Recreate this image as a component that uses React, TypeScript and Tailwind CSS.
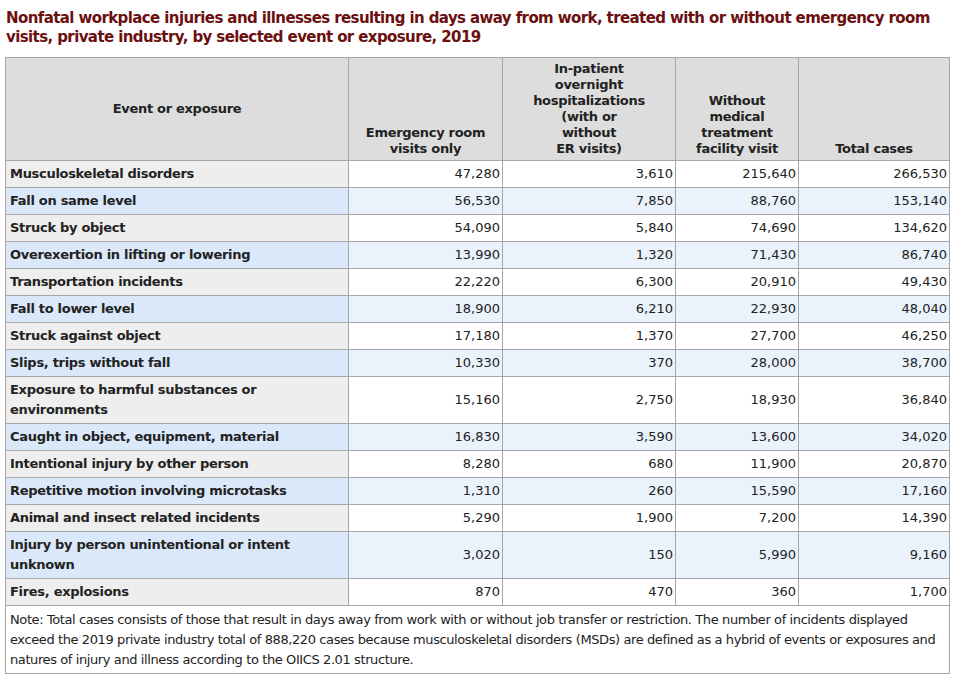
const rows: [string, string, string, string, string][] = [
  ["Musculoskeletal disorders", "47,280", "3,610", "215,640", "266,530"],
  ["Fall on same level", "56,530", "7,850", "88,760", "153,140"],
  ["Struck by object", "54,090", "5,840", "74,690", "134,620"],
  ["Overexertion in lifting or lowering", "13,990", "1,320", "71,430", "86,740"],
  ["Transportation incidents", "22,220", "6,300", "20,910", "49,430"],
  ["Fall to lower level", "18,900", "6,210", "22,930", "48,040"],
  ["Struck against object", "17,180", "1,370", "27,700", "46,250"],
  ["Slips, trips without fall", "10,330", "370", "28,000", "38,700"],
  ["Exposure to harmful substances or environments", "15,160", "2,750", "18,930", "36,840"],
  ["Caught in object, equipment, material", "16,830", "3,590", "13,600", "34,020"],
  ["Intentional injury by other person", "8,280", "680", "11,900", "20,870"],
  ["Repetitive motion involving microtasks", "1,310", "260", "15,590", "17,160"],
  ["Animal and insect related incidents", "5,290", "1,900", "7,200", "14,390"],
  ["Injury by person unintentional or intent unknown", "3,020", "150", "5,990", "9,160"],
  ["Fires, explosions", "870", "470", "360", "1,700"],
];

export default function App() {
  return (
    <div className="min-h-screen bg-white text-[#222] font-['DejaVu_Sans',sans-serif] text-[13px] px-[5px] pt-[9px]">
      <h2 className="text-[15px] leading-[19px] font-bold tracking-[-0.6px] text-[#6b0f0f] pl-px">
        Nonfatal workplace injuries and illnesses resulting in days away from work, treated with or without emergency room
        visits, private industry, by selected event or exposure, 2019
      </h2>
      <table className="mt-[10px] w-[944px] table-fixed border-collapse border border-[#a6a6a6]">
        <colgroup>
          <col className="w-[343px]" />
          <col className="w-[154px]" />
          <col className="w-[173px]" />
          <col className="w-[123px]" />
          <col className="w-[151px]" />
        </colgroup>
        <thead>
          <tr className="bg-[#dddddd] font-bold leading-[16px] tracking-[-0.3px]">
            <th className="border border-[#a6a6a6] align-middle px-1 py-1 h-[103px]">Event or exposure</th>
            <th className="border border-[#a6a6a6] align-bottom px-1 pt-1 pb-[3px]">
              Emergency room
              <br />
              visits only
            </th>
            <th className="border border-[#a6a6a6] align-bottom px-1 pt-[2px] pb-[3px]">
              In-patient
              <br />
              overnight
              <br />
              hospitalizations
              <br />
              (with or
              <br />
              without
              <br />
              ER visits)
            </th>
            <th className="border border-[#a6a6a6] align-bottom px-1 pt-1 pb-[3px]">
              Without
              <br />
              medical
              <br />
              treatment
              <br />
              facility visit
            </th>
            <th className="border border-[#a6a6a6] align-bottom px-1 pt-1 pb-[3px]">Total cases</th>
          </tr>
        </thead>
        <tbody className="leading-[20px]">
          {rows.map((r, i) => {
            const even = i % 2 === 1;
            return (
              <tr key={r[0]} className={even ? "bg-[#eaf2fc]" : "bg-white"}>
                <th
                  className={`border border-[#a6a6a6] text-left font-bold tracking-[-0.3px] px-[4px] py-[3px] ${
                    even ? "bg-[#dbe8f9]" : "bg-[#eeeeee]"
                  }`}
                >
                  {r[0]}
                </th>
                {r.slice(1).map((v, j) => (
                  <td key={j} className="border border-[#a6a6a6] text-right px-[2px] py-[3px]">
                    {v}
                  </td>
                ))}
              </tr>
            );
          })}
          <tr>
            <td
              colSpan={5}
              className="border border-[#a6a6a6] px-[4px] pt-[4px] pb-[3px] leading-[20px] tracking-[-0.4px]"
            >
              Note: Total cases consists of those that result in days away from work with or without job transfer or
              restriction. The number of incidents displayed exceed the 2019 private industry total of 888,220 cases
              because musculoskeletal disorders (MSDs) are defined as a hybrid of events or exposures and natures of injury
              and illness according to the OIICS 2.01 structure.
            </td>
          </tr>
        </tbody>
      </table>
    </div>
  );
}
